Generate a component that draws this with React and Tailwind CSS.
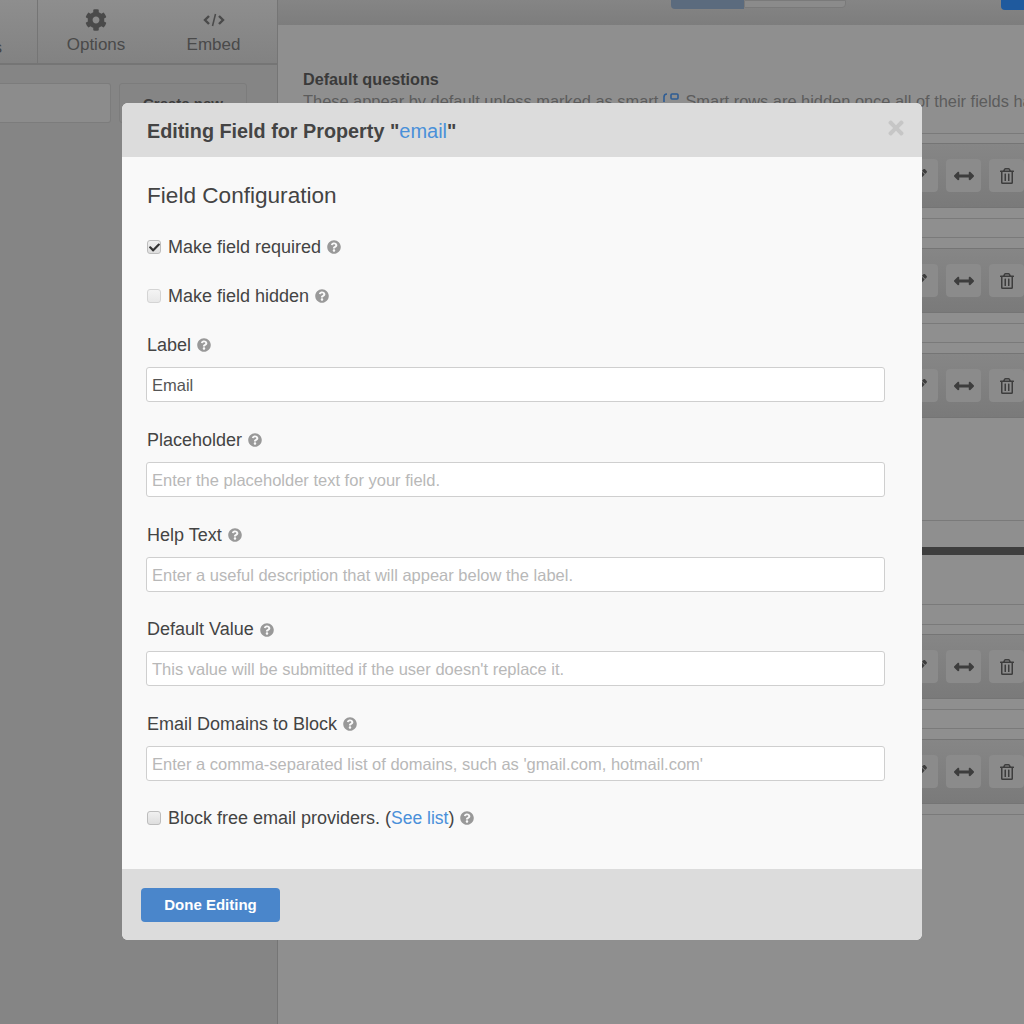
import React from "react";
import { FaCog, FaTimes, FaQuestionCircle, FaPencilAlt, FaArrowsAltH, FaRegTrashAlt, FaCheck } from "react-icons/fa";

const FONT = "font-['Liberation_Sans',Arial,sans-serif]";

const Help = () => <FaQuestionCircle className="inline-block text-[14px] text-[#999] ml-[6px] -mt-[2px]" />;

const ActionRow = () => (
  <div className="h-[65px] border-y border-[#757575] bg-gradient-to-b from-[#868686] to-[#7a7a7a] flex justify-end gap-[8px] pt-[15px]">
    <div className="w-[35px] h-[33px] rounded-[4px] bg-[#8b8b8b] flex items-center justify-center text-[#3d3d3d] text-[13px]"><FaPencilAlt /></div>
    <div className="w-[35px] h-[33px] rounded-[4px] bg-[#8b8b8b] flex items-center justify-center text-[#3d3d3d] text-[20px]"><FaArrowsAltH /></div>
    <div className="w-[35px] h-[33px] rounded-[4px] bg-[#8b8b8b] flex items-center justify-center text-[#3d3d3d] text-[16px]"><FaRegTrashAlt /></div>
  </div>
);

const Strip = () => (
  <div className="h-[40px] py-[10px]">
    <div className="h-[20px] border-y border-[#7a7a7a]" />
  </div>
);

const TextField = ({ label, value, placeholder }) => (
  <div>
    <div className="text-[18px] leading-[24px] text-[#444]">{label}<Help /></div>
    <input
      readOnly
      value={value || ""}
      placeholder={placeholder}
      className="mt-[10px] -ml-px w-[739px] h-[35px] bg-white border border-[#cfcfcf] rounded-[3px] px-[5px] pt-[2px] text-[16.5px] text-[#555] placeholder:text-[#b8b8b8] outline-none"
    />
  </div>
);

const CheckRow = ({ checked, faded, children }) => (
  <div className="flex items-center h-[24px] text-[18px] text-[#444]">
    <span className={`w-[14px] h-[14px] rounded-[3px] border flex items-center justify-center text-[#333] text-[11px] mr-[7px] bg-gradient-to-b ${faded ? "border-[#d4d4d4] from-[#f4f4f4] to-[#e8e8e8]" : "border-[#bdbdbd] from-[#f0f0f0] to-[#dedede]"}`}>
      {checked && <FaCheck />}
    </span>
    <span>{children}<Help /></span>
  </div>
);

export default function App() {
  return (
    <div className={`relative w-full h-screen overflow-hidden flex bg-[#8f8f8f] ${FONT}`}>
      {/* page behind the overlay */}
      <aside className="w-[278px] shrink-0 bg-[#858585] border-r border-[#757575]">
        <div className="h-[65px] flex border-b-2 border-[#757575] bg-gradient-to-b from-[#8e8e8e] to-[#828282]">
          <div className="w-[38px] border-r border-[#757575] text-[#444] text-[17px] pt-[35px] pr-[35px] flex justify-end overflow-hidden"><span>Fields</span></div>
          <div className="w-[116px] flex flex-col items-center pt-[9px] text-[#4a4a4a]">
            <FaCog className="text-[22px]" />
            <span className="text-[17px] leading-[20px] mt-[4px]">Options</span>
          </div>
          <div className="w-[119px] flex flex-col items-center pt-[9px] text-[#4a4a4a]">
            <svg width="22" height="22" viewBox="0 0 22 22" fill="none" stroke="currentColor">
              <path d="M6 7l-4 4 4 4M16 7l4 4-4 4" strokeWidth="2.4" />
              <path d="M12.5 5l-3 12" strokeWidth="1.5" />
            </svg>
            <span className="text-[17px] leading-[20px] mt-[4px]">Embed</span>
          </div>
        </div>
        <div className="flex mt-[18px] gap-[8px]">
          <div className="w-[111px] h-[40px] border border-[#7c7c7c] border-l-0 rounded-r-[3px] bg-[#8c8c8c]" />
          <div className="w-[128px] h-[40px] border border-[#7c7c7c] rounded-[3px] text-center font-bold text-[15px] leading-[40px] text-[#3d3d3d]">Create new</div>
        </div>
      </aside>

      <main className="flex-1 min-w-0">
        <div className="h-[25px] bg-gradient-to-b from-[#858585] to-[#7d7d7d] relative">
          <div className="absolute left-[393px] top-0 flex h-[9px]">
            <div className="w-[73px] bg-[#5b6b7e] rounded-bl-[4px]" />
            <div className="w-[102px] h-[8px] bg-[#8b8b8b] border border-[#7a7a7a] rounded-br-[4px]" />
          </div>
          <div className="absolute right-0 top-0 w-[23px] h-[10px] bg-[#1f5a9e] rounded-bl-[4px]" />
        </div>
        <div className="pl-[25px] pt-[44px]">
          <h3 className="text-[16.2px] leading-[20px] font-bold text-[#3a3a3a]">Default questions</h3>
          <p className="mt-[2px] text-[16.4px] leading-[20px] text-[#5c5c5c] whitespace-nowrap">
            These appear by default unless marked as smart{" "}
            <svg className="inline-block mr-[2px] -mt-[4px]" width="16" height="16" viewBox="0 0 16 16" fill="none" stroke="#2f5d94" strokeWidth="1.6">
              <rect x="8" y="1" width="7" height="5" rx="1" />
              <path d="M1 9V4a3 3 0 0 1 3-3M1 13h5M9 13h6" />
            </svg>
            {" "}Smart rows are hidden once all of their fields have values.
          </p>
          <div className="mt-[22px] border-t border-[#7a7a7a] h-[10px]" />
          <ActionRow />
          <Strip />
          <ActionRow />
          <Strip />
          <ActionRow />
          <div className="h-[103px] border-b border-[#7a7a7a]" />
          <div className="h-[8px] mt-[26px] bg-[#3e3e3e]" />
          <div className="h-[50px] border-b border-[#7a7a7a]" />
          <div className="h-[20px] border-b border-[#7a7a7a]" />
          <div className="h-[9px]" />
          <ActionRow />
          <Strip />
          <ActionRow />
          <div className="h-[11px] border-b border-[#7a7a7a]" />
        </div>
      </main>

      {/* modal */}
      <div className="absolute left-[122px] top-[103px] w-[800px] h-[837px] rounded-[6px] overflow-hidden flex flex-col bg-[#f9f9f9]">
        <div className="h-[54px] shrink-0 bg-[#dcdcdc] flex items-center justify-between pl-[25px] pr-[15px]">
          <h2 className="text-[19.8px] font-bold text-[#444] pt-[3px]">
            Editing Field for Property "<span className="font-normal text-[20px] text-[#4a90d9]">email</span>"
          </h2>
          <FaTimes className="text-[#c6c6c6] text-[22px] -mt-[5px]" />
        </div>
        <div className="flex-1 pl-[25px] pt-[24px]">
          <h3 className="text-[22.6px] leading-[30px] text-[#444]">Field Configuration</h3>
          <div className="mt-[24px] flex flex-col gap-[25px]">
            <CheckRow checked>Make field required</CheckRow>
            <CheckRow faded>Make field hidden</CheckRow>
          </div>
          <div className="mt-[25px] flex flex-col gap-[25.75px]">
            <TextField label="Label" value="Email" />
            <TextField label="Placeholder" placeholder="Enter the placeholder text for your field." />
            <TextField label="Help Text" placeholder="Enter a useful description that will appear below the label." />
            <TextField label="Default Value" placeholder="This value will be submitted if the user doesn't replace it." />
            <TextField label="Email Domains to Block" placeholder="Enter a comma-separated list of domains, such as 'gmail.com, hotmail.com'" />
          </div>
          <div className="mt-[25px]">
            <CheckRow>
              Block free email providers. (<span className="text-[17.5px] text-[#4a90d9]">See list</span>)
            </CheckRow>
          </div>
        </div>
        <div className="h-[71px] shrink-0 bg-[#dcdcdc] pl-[19px] pt-[19px]">
          <button className="w-[139px] h-[34px] rounded-[4px] bg-[#4a86cb] text-white font-bold text-[15px]">Done Editing</button>
        </div>
      </div>
    </div>
  );
}
